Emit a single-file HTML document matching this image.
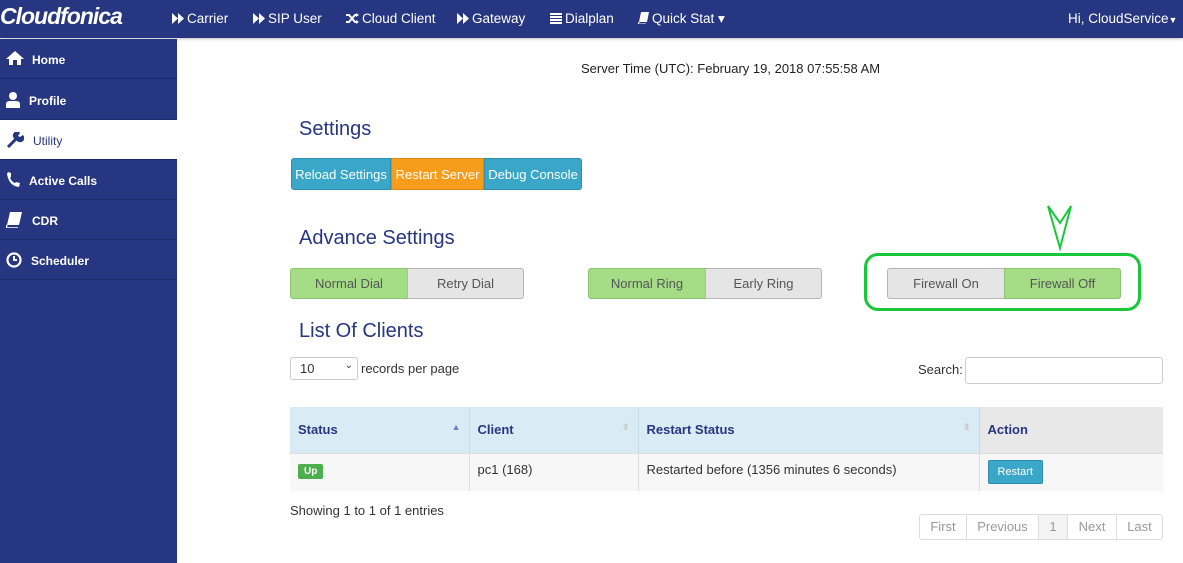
<!DOCTYPE html>
<html><head><meta charset="utf-8"><style>
*{box-sizing:border-box;margin:0;padding:0}
body{width:1183px;height:563px;overflow:hidden;background:#fff;font-family:"Liberation Sans",Arial,sans-serif;position:relative;color:#333}
.a{position:absolute}
.nav{left:0;top:0;width:1183px;height:38px;background:#263680;color:#fff;font-size:13.5px;box-shadow:0 1px 3px rgba(0,0,0,.25)}
.nav span{position:absolute;top:11px;white-space:nowrap}
.nav svg{vertical-align:-1px;margin-right:3px}
.side{left:0;top:39px;width:177px;height:524px;background:#263680}
.si{position:absolute;left:0;width:177px;height:40px;border-bottom:1px solid #1c2a6a;color:#fff;font-size:12px;font-weight:bold}
.si span{position:absolute;left:30px;top:14px}
.si svg{position:absolute;left:6px;top:12px}
.h{font-size:20px;color:#263680}
.btn{position:absolute;height:32px;font-size:13px;color:#fff;text-align:center;line-height:31px}
.tg{position:absolute;height:31px;font-size:13px;color:#555;text-align:center;line-height:29px;border:1px solid #b5b5b5}
.g{background:#a5dc86;border-color:#8cc36f}
.gr{background:#e5e5e5}
table{border-collapse:collapse;font-size:13px}
th{background:#d9ecf5;color:#263680;text-align:left;padding:0 8px;height:46px;border-right:1px solid #c9dbe4}
td{background:#f7f7f7;padding:0 8px;height:38px;border-right:1px solid #ddd;border-top:1px solid #ddd;vertical-align:top;padding-top:8px}
.pg{position:absolute;top:514px;height:26px;border:1px solid #ddd;font-size:13px;color:#999;line-height:24px;text-align:center}
</style></head><body>
<div class="a nav">
<span style="left:0;top:3px;font-size:23px;font-style:italic;font-weight:bold;font-family:'Liberation Sans',sans-serif;letter-spacing:-1px">Cloudfonica</span>
<span style="left:172px"><svg width="12" height="11"><path d="M0 0L6 5.5L0 11ZM6 0L12 5.5L6 11Z" fill="#fff"/></svg>Carrier</span>
<span style="left:253px"><svg width="12" height="11"><path d="M0 0L6 5.5L0 11ZM6 0L12 5.5L6 11Z" fill="#fff"/></svg>SIP User</span>
<span style="left:346px"><svg width="13" height="11"><path d="M0 2H3L9 9H11M0 9H3L9 2H11" stroke="#fff" stroke-width="2" fill="none"/><path d="M10 0L13 2L10 4ZM10 7L13 9L10 11Z" fill="#fff"/></svg>Cloud Client</span>
<span style="left:457px"><svg width="12" height="11"><path d="M0 0L6 5.5L0 11ZM6 0L12 5.5L6 11Z" fill="#fff"/></svg>Gateway</span>
<span style="left:550px"><svg width="12" height="11"><path d="M0 0h12v2H0zM0 3h12v2H0zM0 6h12v2H0zM0 9h12v2H0z" fill="#fff"/></svg>Dialplan</span>
<span style="left:638px"><svg width="11" height="12"><path d="M3 0H11L9 10H1Z" fill="#fff"/><path d="M1 10L0 12H8" stroke="#fff" fill="none"/></svg>Quick Stat ▾</span>
<span style="left:1068px">Hi, CloudService<span style="position:static;font-size:9px">▼</span></span>
</div>
<div class="a side">
<div class="si" style="top:0"><svg width="18" height="14"><path d="M9 0L18 8H15V14H11V9H7V14H3V8H0Z" fill="#fff"/></svg><span style="left:32px">Home</span></div>
<div class="si" style="top:41px"><svg width="14" height="16"><circle cx="7" cy="4" r="4" fill="#fff"/><path d="M0 16V12Q0 9 4 9H10Q14 9 14 12V16Z" fill="#fff"/></svg><span style="left:29px">Profile</span></div>
<div class="si" style="top:81px;background:#fff;color:#263680;font-weight:normal"><svg width="18" height="16"><path d="M2 15L10 7" stroke="#263680" stroke-width="3"/><path d="M9 7A4 4 0 1 1 14 1L12 4L14 5L17 3A4 4 0 0 1 11 9Z" fill="#263680"/></svg><span style="left:33px">Utility</span></div>
<div class="si" style="top:121px"><svg width="14" height="16"><path d="M2 0L5 1L5 5L4 6Q6 10 9 11L10 10L14 11L13 15Q3 14 1 2Z" fill="#fff"/></svg><span style="left:29px">Active Calls</span></div>
<div class="si" style="top:161px"><svg width="16" height="16"><path d="M4 0H16L13 13H1Z" fill="#fff"/><path d="M1 13L0 16H12" stroke="#fff" stroke-width="1.5" fill="none"/></svg><span style="left:32px">CDR</span></div>
<div class="si" style="top:201px"><svg width="16" height="16"><circle cx="8" cy="8" r="6.5" stroke="#fff" stroke-width="2.2" fill="none"/><path d="M8 4V8H11" stroke="#fff" stroke-width="2" fill="none"/></svg><span style="left:31px">Scheduler</span></div>
</div>
<div class="a" style="left:581px;top:61px;font-size:13px;color:#222">Server Time (UTC): February 19, 2018 07:55:58 AM</div>
<div class="a h" style="left:299px;top:118px">Settings</div>
<div class="btn" style="left:291px;top:158px;width:100px;background:#3aa7c8;border:1px solid #2e8fad;border-radius:3px 0 0 3px">Reload Settings</div>
<div class="btn" style="left:391px;top:158px;width:93px;background:#f89c1c;border:1px solid #e08a10">Restart Server</div>
<div class="btn" style="left:484px;top:158px;width:98px;background:#3aa7c8;border:1px solid #2e8fad;border-radius:0 3px 3px 0">Debug Console</div>
<div class="a h" style="left:299px;top:227px">Advance Settings</div>
<div class="tg g" style="left:290px;top:268px;width:118px;border-radius:3px 0 0 3px">Normal Dial</div>
<div class="tg gr" style="left:407px;top:268px;width:117px;border-radius:0 3px 3px 0">Retry Dial</div>
<div class="tg g" style="left:588px;top:268px;width:118px;border-radius:3px 0 0 3px">Normal Ring</div>
<div class="tg gr" style="left:705px;top:268px;width:117px;border-radius:0 3px 3px 0">Early Ring</div>
<div class="tg gr" style="left:887px;top:268px;width:118px;border-radius:3px 0 0 3px">Firewall On</div>
<div class="tg g" style="left:1004px;top:268px;width:117px;border-radius:0 3px 3px 0">Firewall Off</div>
<div class="a" style="left:864px;top:253px;width:277px;height:58px;border:3px solid #19c73a;border-radius:14px"></div>
<svg class="a" style="left:0;top:0" width="1183" height="563"><polygon points="1048,206 1060,223 1071,206 1060,248" fill="none" stroke="#19c73a" stroke-width="2"/></svg>
<div class="a h" style="left:299px;top:320px">List Of Clients</div>
<div class="a" style="left:290px;top:357px;width:68px;height:23px;border:1px solid #ccc;border-radius:3px;font-size:13px;padding:3px 9px">10<span style="position:absolute;right:4px;top:2px;font-size:10px">⌄</span></div>
<div class="a" style="left:361px;top:361px;font-size:13px">records per page</div>
<div class="a" style="left:918px;top:362px;font-size:13px">Search:</div>
<div class="a" style="left:965px;top:357px;width:198px;height:27px;border:1px solid #ccc;border-radius:3px"></div>
<table class="a" style="left:290px;top:407px;width:873px">
<tr><th style="width:179px">Status<span style="float:right;font-size:9px;color:#6a7fc8">▲</span></th><th style="width:169px">Client<span style="float:right;font-size:9px;color:#ccc">⬍</span></th><th style="width:341px">Restart Status<span style="float:right;font-size:9px;color:#ccc">⬍</span></th><th style="background:#e8e8e8;border:none">Action</th></tr>
<tr><td><span style="background:#4cae4c;color:#fff;font-size:10px;font-weight:bold;padding:2px 6px;border-radius:2px">Up</span></td><td>pc1 (168)</td><td>Restarted before (1356 minutes 6 seconds)</td><td style="border-right:none;padding-top:6px"><span style="display:inline-block;background:#3aa7c8;border:1px solid #2e8fad;color:#fff;font-size:11px;padding:5px 9px;border-radius:2px">Restart</span></td></tr>
</table>
<div class="a" style="left:290px;top:503px;font-size:13px">Showing 1 to 1 of 1 entries</div>
<div class="pg" style="left:919px;width:48px;border-radius:3px 0 0 3px">First</div>
<div class="pg" style="left:966px;width:73px">Previous</div>
<div class="pg" style="left:1038px;width:30px;background:#f3f3f3">1</div>
<div class="pg" style="left:1067px;width:50px">Next</div>
<div class="pg" style="left:1116px;width:47px;border-radius:0 3px 3px 0">Last</div>
</body></html>
